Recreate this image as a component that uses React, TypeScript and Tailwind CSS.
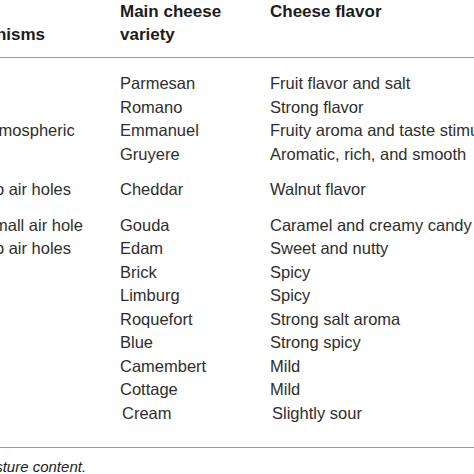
import React from "react";

type Row = { mech?: string; cheese: string; flavor: string; group?: boolean; nudge?: boolean };

const rows: Row[] = [
  { cheese: "Parmesan", flavor: "Fruit flavor and salt", group: true },
  { cheese: "Romano", flavor: "Strong flavor" },
  { mech: "Atmospheric", cheese: "Emmanuel", flavor: "Fruity aroma and taste stimulation" },
  { cheese: "Gruyere", flavor: "Aromatic, rich, and smooth" },
  { mech: "No air holes", cheese: "Cheddar", flavor: "Walnut flavor", group: true },
  { mech: "Small air hole", cheese: "Gouda", flavor: "Caramel and creamy candy", group: true },
  { mech: "No air holes", cheese: "Edam", flavor: "Sweet and nutty" },
  { cheese: "Brick", flavor: "Spicy" },
  { cheese: "Limburg", flavor: "Spicy" },
  { cheese: "Roquefort", flavor: "Strong salt aroma" },
  { cheese: "Blue", flavor: "Strong spicy" },
  { cheese: "Camembert", flavor: "Mild" },
  { cheese: "Cottage", flavor: "Mild" },
  { cheese: "Cream", flavor: "Slightly sour", nudge: true },
];

export default function App() {
  return (
    <div className="h-[474px] w-[474px] overflow-hidden bg-white font-['Liberation_Sans',Arial,sans-serif]">
      <div className="-ml-[17px] w-[700px]">
        {/* Header */}
        <div className="grid grid-cols-[137px_150px_1fr] border-b-[1.5px] border-[#9a9a9a] pb-[11px] text-[17px] font-bold leading-[23px] text-[#1c1c1c]">
          <div className="-ml-[40px] self-end whitespace-nowrap">Mechanisms</div>
          <div>
            Main cheese
            <br />
            variety
          </div>
          <div className="whitespace-nowrap">Cheese flavor</div>
        </div>

        {/* Body */}
        <div className="border-b-[1.5px] border-[#9a9a9a] pb-[22px] pt-[2px] text-[16.5px] leading-[23.5px] text-[#2e2e2e]">
          {rows.map((r, i) => (
            <div
              key={i}
              className={`grid grid-cols-[137px_150px_1fr] whitespace-nowrap ${r.group ? "mt-[12px]" : ""}`}
            >
              <div>{r.mech ?? ""}</div>
              <div className={r.nudge ? "pl-[2px]" : ""}>{r.cheese}</div>
              <div className={r.nudge ? "pl-[2px]" : ""}>{r.flavor}</div>
            </div>
          ))}
        </div>

        <p className="-ml-[12px] mt-[10px] text-[15px] italic leading-[17px] text-[#222]">Moisture content.</p>
      </div>
    </div>
  );
}
